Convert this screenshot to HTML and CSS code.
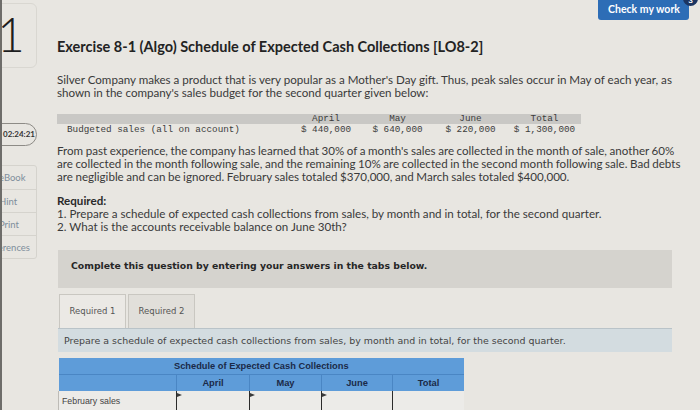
FILE: index.html
```html
<!DOCTYPE html>
<html lang="en">
<head>
  <meta charset="UTF-8">
  <meta name="viewport" content="width=device-width, initial-scale=1.0">
  <title>Exercise 8-1 (Algo)</title>
  <link rel="stylesheet" href="styles.css">
</head>
<body>
  <div class="page">
    <!-- Left rail: question number, timer, tools -->
    <aside class="rail">
      <div class="qnum">1</div>
      <div class="timer">02:24:21</div>
      <ul class="tools">
        <li class="tool">eBook</li>
        <li class="tool">Hint</li>
        <li class="tool">Print</li>
        <li class="tool tool-refs">References</li>
      </ul>
    </aside>

    <main class="main">
      <div class="topbar">
        <button type="button" class="check-btn">Check my work<span class="badge">3</span></button>
      </div>

      <h1 class="title">Exercise 8-1 (Algo) Schedule of Expected Cash Collections [LO8-2]</h1>

      <p class="text intro">Silver Company makes a product that is very popular as a Mother's Day gift. Thus, peak sales occur in May of each year, as shown in the company's sales budget for the second quarter given below:</p>

      <table class="budget">
        <thead>
          <tr>
            <th class="b-label"></th>
            <th>April</th>
            <th>May</th>
            <th>June</th>
            <th>Total</th>
          </tr>
        </thead>
        <tbody>
          <tr>
            <td class="b-label">Budgeted sales (all on account)</td>
            <td>$ 440,000</td>
            <td>$ 640,000</td>
            <td>$ 220,000</td>
            <td class="b-total">$ 1,300,000</td>
          </tr>
        </tbody>
      </table>

      <p class="text history">From past experience, the company has learned that 30% of a month's sales are collected in the month of sale, another 60% are collected in the month following sale, and the remaining 10% are collected in the second month following sale. Bad debts are negligible and can be ignored. February sales totaled $370,000, and March sales totaled $400,000.</p>

      <div class="required">
        <div class="req-head">Required:</div>
        <div>1. Prepare a schedule of expected cash collections from sales, by month and in total, for the second quarter.</div>
        <div>2. What is the accounts receivable balance on June 30th?</div>
      </div>

      <div class="answer">
        <div class="notice">Complete this question by entering your answers in the tabs below.</div>

        <div class="tabs">
          <div class="tab active">Required 1</div>
          <div class="tab">Required 2</div>
        </div>
        <div class="instruction">Prepare a schedule of expected cash collections from sales, by month and in total, for the second quarter.</div>

        <table class="schedule">
          <tr class="s-title">
            <th colspan="5">Schedule of Expected Cash Collections</th>
          </tr>
          <tr class="s-cols">
            <th class="s-label"></th>
            <th>April</th>
            <th>May</th>
            <th>June</th>
            <th>Total</th>
          </tr>
          <tr class="s-row">
            <td class="s-label">February sales</td>
            <td class="cell flag"></td>
            <td class="cell flag"></td>
            <td class="cell flag"></td>
            <td class="cell"></td>
          </tr>
        </table>
      </div>
    </main>
  </div>
</body>
</html>
```

FILE: styles.css
```css
*, *::before, *::after {
  box-sizing: border-box;
}
body {
  margin: 0;
  background: #e8e6e1;
  color: #3a3a3a;
  font-family: "Lato", Arial, sans-serif;
  overflow: hidden;
}
.page {
  display: flex;
  height: 410px;
  border-left: 2px solid #6e6d6a;
}

/* Left rail */
.rail {
  width: 35px;
  flex-shrink: 0;
  overflow: hidden;
  padding-top: 3px;
}
.qnum {
  height: 65px;
  margin-left: -20px;
  border: 1px solid #d9d7d1;
  border-radius: 6px;
  font-family: "Lato", sans-serif;
  font-weight: 300;
  font-size: 48px;
  line-height: 60px;
  color: #1e1e1e;
  padding-left: 14px;
}
.timer {
  margin-top: 55px;
  margin-left: -12px;
  height: 23px;
  border: 1px solid #8d8b86;
  border-radius: 0 12px 12px 0;
  font-size: 8px;
  font-weight: 700;
  line-height: 21px;
  padding-left: 12px;
  color: #333;
}
.tools {
  list-style: none;
  margin: 19px 0 0 -10px;
  padding: 0;
  border: 1px solid #d5d3cd;
  border-radius: 0 3px 3px 0;
}
.tool {
  height: 23px;
  line-height: 23px;
  font-size: 9.5px;
  color: #7f8e9c;
  border-top: 1px solid #d5d3cd;
  white-space: nowrap;
  padding-left: 6px;
}
.tool:first-child {
  border-top: none;
}
.tool-refs {
  padding-left: 0;
  text-indent: -9px;
}

/* Main column */
.main {
  flex: 1;
  padding: 0 14px 0 20px;
}
.topbar {
  display: flex;
  justify-content: flex-end;
  margin-right: -3px;
  height: 20px;
}
.check-btn {
  position: relative;
  width: 91px;
  height: 22px;
  margin-top: -2px;
  border: none;
  border-radius: 3px;
  background: #2d6db6;
  color: #fff;
  font-family: "Lato", Arial, sans-serif;
  font-weight: 700;
  font-size: 10.5px;
  padding: 0 0 0 1px;
}
.badge {
  position: absolute;
  top: -7px;
  right: -9px;
  width: 15px;
  height: 15px;
  border-radius: 50%;
  background: #1c3561;
  color: #fff;
  font-size: 8px;
  line-height: 19px;
  text-align: center;
}
.title {
  margin: 17px 0 0;
  font-size: 14.5px;
  font-weight: 700;
  color: #232323;
  line-height: 20px;
}
.text {
  margin: 0;
  font-size: 11.6px;
  line-height: 13px;
}
.intro {
  margin-top: 16px;
}
.history {
  word-spacing: -0.4px;
}

/* Sales budget table */
.budget {
  margin-top: 15px;
  margin-bottom: 9px;
  width: 524px;
  border-collapse: collapse;
  font-family: "Liberation Mono", monospace;
  font-size: 9.3px;
  color: #3c3c3c;
}
.budget th {
  background: #c9c8c5;
  font-weight: normal;
  height: 10px;
  line-height: 10px;
  padding: 0;
  text-align: center;
}
.budget td {
  padding: 0;
  line-height: 11px;
  text-align: center;
}
.budget .b-label {
  width: 233px;
  text-align: left;
  padding-left: 10px;
}
.budget th:nth-child(2), .budget td:nth-child(2) { width: 72px; }
.budget th:nth-child(3), .budget td:nth-child(3) { width: 71px; }
.budget th:nth-child(4), .budget td:nth-child(4) { width: 75px; }

.required {
  margin-top: 11px;
  font-size: 11.6px;
  line-height: 13px;
}
.req-head {
  font-weight: 700;
  color: #2a2a2a;
}

/* Answer area */
.answer {
  margin: 17px 14px 0 1px;
}
.notice {
  height: 38px;
  background: #d5d3ce;
  font-family: "DejaVu Sans", Verdana, sans-serif;
  font-weight: 700;
  font-size: 9.3px;
  line-height: 32px;
  padding-left: 13px;
  color: #262626;
}
.tabs {
  display: flex;
  gap: 2px;
  margin-top: 6px;
  margin-left: 1px;
}
.tab {
  width: 67px;
  height: 34px;
  border: 1px solid #c9c7c1;
  border-bottom: none;
  background: #e1dfda;
  font-family: "DejaVu Sans", Verdana, sans-serif;
  font-size: 8.5px;
  color: #555;
  line-height: 33px;
  text-align: center;
}
.tab.active {
  background: #ebe9e5;
}
.instruction {
  height: 24px;
  background: #d3dce0;
  border-top: 1px solid #b9c3c8;
  font-family: "DejaVu Sans", Verdana, sans-serif;
  font-size: 9.45px;
  line-height: 24px;
  padding-left: 6px;
  color: #444;
}

/* Schedule grid */
.schedule {
  margin-top: 6px;
  width: 406px;
  border-collapse: collapse;
  font-family: "Liberation Sans", Arial, sans-serif;
  font-size: 9.3px;
}
.schedule th {
  background: #5e9cd9;
  color: #1b2a48;
  font-weight: 700;
  padding: 0;
  text-align: center;
  border-left: 1px solid #4a86c4;
}
.schedule .s-label {
  width: 118px;
  border-left: none;
}
.s-title th {
  height: 16px;
  border-left: none;
  border-bottom: 1px solid #4a86c4;
}
.s-cols th {
  height: 17px;
}
.s-cols th:nth-child(2) { width: 73px; }
.s-cols th:nth-child(3) { width: 72px; }
.s-cols th:nth-child(4) { width: 71px; }
.s-row td {
  height: 20px;
  background: #ecebe8;
  padding: 0;
}
.s-row .s-label {
  font-size: 8.8px;
  color: #444;
  padding-left: 3px;
  border-left: 1px solid #bdbbb6;
}
.cell {
  position: relative;
  border-left: 1px solid #2b2b2b;
}
/* small marker on editable cells */
.cell.flag::before {
  content: "";
  position: absolute;
  left: 0;
  top: 2px;
  border-left: 5px solid #3a3a3a;
  border-top: 2px solid transparent;
  border-bottom: 2px solid transparent;
}
```
